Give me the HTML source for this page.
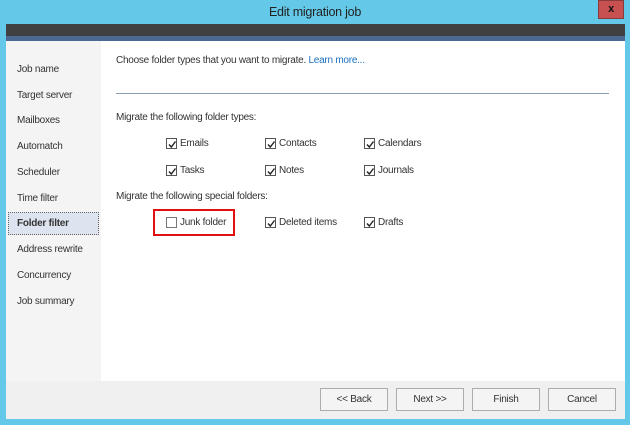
<!DOCTYPE html><html><head><style>
*{margin:0;padding:0;box-sizing:border-box}
body{width:630px;height:425px;background:#64c9e8;font-family:"Liberation Sans",sans-serif;font-size:10px;letter-spacing:-0.25px;color:#333;position:relative;overflow:hidden}
.a{position:absolute}
.t{position:absolute;white-space:nowrap;line-height:13px}
.cb{position:absolute;width:11px;height:11px;border:1px solid #555;background:#fff}
.cb svg{position:absolute;left:0;top:0}
.btn{position:absolute;top:388px;width:68px;height:23px;border:1px solid #adadad;background:#f4f4f4;text-align:center;line-height:21px;font-size:10px}
</style></head><body>
<div class="t" style="left:0;width:630px;top:5px;text-align:center;font-size:12.5px;line-height:15px;color:#222">Edit migration job</div>
<div class="a" style="left:598px;top:0;width:26px;height:19px;background:#c75050;border:1px solid #8b3a3a;color:#111;font-weight:bold;font-size:11px;text-align:center;line-height:17px">x</div>
<div class="a" style="left:6px;top:24px;width:619px;height:12px;background:#404040"></div>
<div class="a" style="left:6px;top:36px;width:619px;height:5px;background:#4d6890"></div>
<div class="a" style="left:6px;top:41px;width:95px;height:340px;background:#f4f4f4"></div>
<div class="a" style="left:101px;top:41px;width:524px;height:340px;background:#fff"></div>
<div class="a" style="left:6px;top:381px;width:619px;height:38px;background:#f0f0f0"></div>
<div class="t" style="left:17px;top:63px">Job name</div>
<div class="t" style="left:17px;top:89px">Target server</div>
<div class="t" style="left:17px;top:114px">Mailboxes</div>
<div class="t" style="left:17px;top:140px">Automatch</div>
<div class="t" style="left:17px;top:166px">Scheduler</div>
<div class="t" style="left:17px;top:192px">Time filter</div>
<div class="a" style="left:8px;top:212px;width:91px;height:23px;background:#dde4f0;border:1px dotted #666"></div>
<div class="t" style="left:17px;top:217px;font-weight:bold">Folder filter</div>
<div class="t" style="left:17px;top:243px">Address rewrite</div>
<div class="t" style="left:17px;top:269px">Concurrency</div>
<div class="t" style="left:17px;top:295px">Job summary</div>
<div class="t" style="left:116px;top:54px">Choose folder types that you want to migrate. <span style="color:#1a6fc0">Learn more...</span></div>
<div class="a" style="left:116px;top:93px;width:493px;height:1px;background:#8a9bb5"></div>
<div class="t" style="left:116px;top:111px">Migrate the following folder types:</div>
<div class="t" style="left:116px;top:190px">Migrate the following special folders:</div>
<div class="a" style="left:153px;top:209px;width:82px;height:27px;border:2px solid #e01010"></div>
<div class="cb" style="left:166px;top:138px"><svg width="11" height="11"><path d="M2 5.5L4.3 8L8.5 2.5" stroke="#222" stroke-width="1.4" fill="none"/></svg></div><div class="t" style="left:180px;top:137px">Emails</div>
<div class="cb" style="left:265px;top:138px"><svg width="11" height="11"><path d="M2 5.5L4.3 8L8.5 2.5" stroke="#222" stroke-width="1.4" fill="none"/></svg></div><div class="t" style="left:279px;top:137px">Contacts</div>
<div class="cb" style="left:364px;top:138px"><svg width="11" height="11"><path d="M2 5.5L4.3 8L8.5 2.5" stroke="#222" stroke-width="1.4" fill="none"/></svg></div><div class="t" style="left:378px;top:137px">Calendars</div>
<div class="cb" style="left:166px;top:165px"><svg width="11" height="11"><path d="M2 5.5L4.3 8L8.5 2.5" stroke="#222" stroke-width="1.4" fill="none"/></svg></div><div class="t" style="left:180px;top:164px">Tasks</div>
<div class="cb" style="left:265px;top:165px"><svg width="11" height="11"><path d="M2 5.5L4.3 8L8.5 2.5" stroke="#222" stroke-width="1.4" fill="none"/></svg></div><div class="t" style="left:279px;top:164px">Notes</div>
<div class="cb" style="left:364px;top:165px"><svg width="11" height="11"><path d="M2 5.5L4.3 8L8.5 2.5" stroke="#222" stroke-width="1.4" fill="none"/></svg></div><div class="t" style="left:378px;top:164px">Journals</div>
<div class="cb" style="left:166px;top:217px;border-color:#777"></div><div class="t" style="left:180px;top:216px">Junk folder</div>
<div class="cb" style="left:265px;top:217px"><svg width="11" height="11"><path d="M2 5.5L4.3 8L8.5 2.5" stroke="#222" stroke-width="1.4" fill="none"/></svg></div><div class="t" style="left:279px;top:216px">Deleted items</div>
<div class="cb" style="left:364px;top:217px"><svg width="11" height="11"><path d="M2 5.5L4.3 8L8.5 2.5" stroke="#222" stroke-width="1.4" fill="none"/></svg></div><div class="t" style="left:378px;top:216px">Drafts</div>
<div class="btn" style="left:320px">&lt;&lt; Back</div>
<div class="btn" style="left:396px">Next &gt;&gt;</div>
<div class="btn" style="left:472px">Finish</div>
<div class="btn" style="left:548px">Cancel</div>
</body></html>
